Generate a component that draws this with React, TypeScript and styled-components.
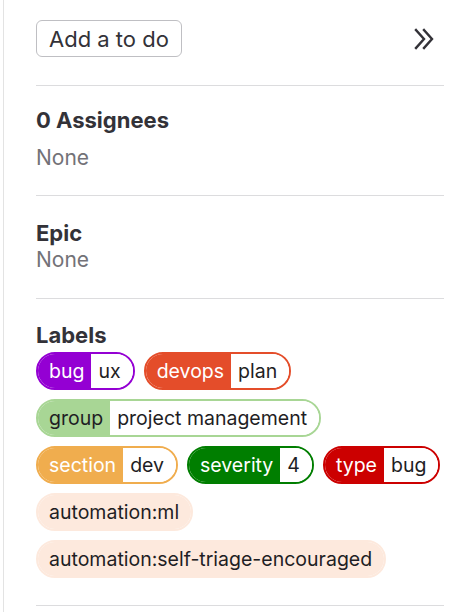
import { createGlobalStyle } from "styled-components";
import styled from "styled-components";

const GlobalStyle = createGlobalStyle`
    html, body {
        margin: 0;
        padding: 0;
        background: #ffffff;
    }
    body {
        font-family: Inter, "Noto Sans", "Liberation Sans", sans-serif;
        color: #333238;
    }
`

const Sidebar = styled.aside`
    margin-left: 3px;
    min-height: 612px;
    border-left: 1px solid #e3e3e3;
    padding: 0 30px 0 32px;
    box-sizing: border-box;
`

interface BlockProps {
    top: number
    bottom: number
}

const Block = styled.section<BlockProps>`
    padding-top: ${({ top }) => top}px;
    padding-bottom: ${({ bottom }) => bottom}px;
    border-bottom: 1px solid #dcdcde;
`

const TopRow = styled.div`
    display: flex;
    align-items: center;
    justify-content: space-between;
`

const TodoButton = styled.button`
    font-family: inherit;
    font-size: 22px;
    line-height: 26px;
    color: #333238;
    background: #fff;
    border: 1px solid #bfbfc3;
    border-radius: 6px;
    height: 37px;
    padding: 0 12px;
`

const Collapse = styled.button`
    border: none;
    background: none;
    padding: 0;
    margin-right: 9px;
    display: flex;
    color: #333238;
`

const Title = styled.h3`
    margin: 0;
    font-size: 22px;
    line-height: 26px;
    font-weight: 700;
    color: #333238;
`

interface ValueProps {
    gap: number
}

const Value = styled.div<ValueProps>`
    margin-top: ${({ gap }) => gap}px;
    font-size: 21px;
    line-height: 26px;
    color: #737278;
`

const LabelList = styled.div`
    margin-top: 4px;
    display: flex;
    flex-wrap: wrap;
    gap: 9px 9px;
`

interface PillProps {
    color: string
}

const Pill = styled.span<PillProps>`
    display: inline-flex;
    height: 38px;
    box-sizing: border-box;
    border: 2px solid ${({ color }) => color};
    border-radius: 19px;
    overflow: hidden;
    font-size: 19.5px;
    line-height: 34px;
    white-space: nowrap;
`

interface KeyProps {
    color: string
    text: string
    scoped: boolean
}

const Key = styled.span<KeyProps>`
    background: ${({ color }) => color};
    color: ${({ text }) => text};
    padding: 0 ${({ scoped }) => (scoped ? 7 : 12)}px 0 11px;
`

const Scope = styled.span`
    background: #fff;
    color: #1f1e24;
    padding: 0 12px 0 7px;
`

interface Label {
    name: string
    value?: string
    color: string
    text: string
}

const labels: Label[] = [
    { name: "bug", value: "ux", color: "#9400d3", text: "#fff" },
    { name: "devops", value: "plan", color: "#e44d2a", text: "#fff" },
    { name: "group", value: "project management", color: "#a8d695", text: "#1f1e24" },
    { name: "section", value: "dev", color: "#f0ad4e", text: "#fff" },
    { name: "severity", value: "4", color: "#007e00", text: "#fff" },
    { name: "type", value: "bug", color: "#cc0000", text: "#fff" },
    { name: "automation:ml", color: "#fde9dd", text: "#1f1e24" },
    { name: "automation:self-triage-encouraged", color: "#fde9dd", text: "#1f1e24" },
]

const ChevronsRight = () => (
    <svg width="22" height="22" viewBox="0 0 22 22" fill="none" stroke="currentColor" strokeWidth="2.4" strokeLinecap="square">
        <path d="M3 2l8 9-8 9" />
        <path d="M11 2l8 9-8 9" />
    </svg>
)

const App = () => {
    return (
        <>
            <GlobalStyle />
            <Sidebar>
                <Block top={20} bottom={28}>
                    <TopRow>
                        <TodoButton>Add a to do</TodoButton>
                        <Collapse aria-label="Collapse sidebar">
                            <ChevronsRight />
                        </Collapse>
                    </TopRow>
                </Block>
                <Block top={21} bottom={24}>
                    <Title>0 Assignees</Title>
                    <Value gap={12}>None</Value>
                </Block>
                <Block top={24} bottom={25}>
                    <Title>Epic</Title>
                    <Value gap={1}>None</Value>
                </Block>
                <Block top={23} bottom={27}>
                    <Title>Labels</Title>
                    <LabelList>
                        {labels.map((label) => (
                            <Pill color={label.color} key={label.name}>
                                <Key color={label.color} text={label.text} scoped={!!label.value}>
                                    {label.name}
                                </Key>
                                {label.value && <Scope>{label.value}</Scope>}
                            </Pill>
                        ))}
                    </LabelList>
                </Block>
            </Sidebar>
        </>
    )
}

export default App;
